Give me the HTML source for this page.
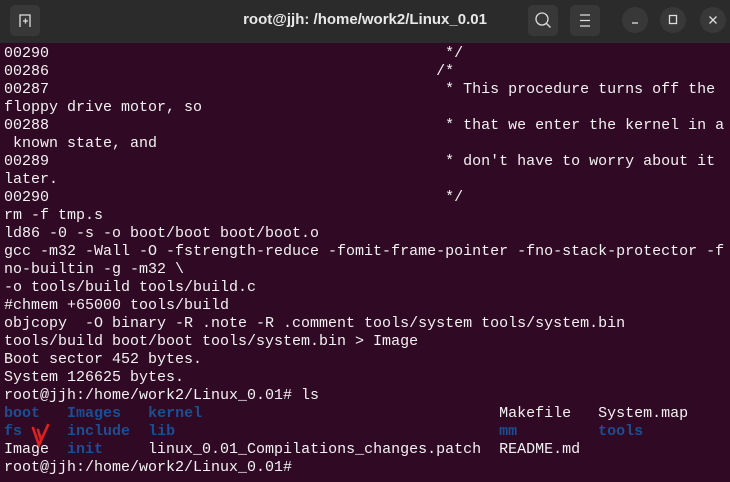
<!DOCTYPE html>
<html><head><meta charset="utf-8"><style>
html,body{margin:0;padding:0;width:730px;height:482px;overflow:hidden;background:#300a24;}
.tb{position:absolute;left:0;top:0;width:730px;height:43px;background:#2b2b2b;}
.title{position:absolute;left:0;width:730px;top:11px;text-align:center;color:#e8e8e8;font:bold 15px "Liberation Sans",sans-serif;}
.btn{position:absolute;top:5px;width:30px;height:31px;background:#383838;border-radius:5px;}
.circ{position:absolute;top:7px;width:26px;height:26px;border-radius:50%;background:#383838;}
pre{position:absolute;left:4px;top:45px;margin:0;font:15px/18px "Liberation Mono",monospace;color:#f2f2f2;}
.d{color:#1a4f96;font-weight:bold;}
</style></head><body>
<div class="tb">
<div class="btn" style="left:10px;"><svg width="30" height="31"><path d="M10 22V10h10v12M13 16h5M15.5 13.5v5" stroke="#ddd" stroke-width="1.3" fill="none"/></svg></div>
<div class="title">root@jjh: /home/work2/Linux_0.01</div>
<div class="btn" style="left:528px;"><svg width="30" height="31"><circle cx="14" cy="14" r="6" stroke="#ddd" stroke-width="1.3" fill="none"/><path d="M18.5 18.5l4 4" stroke="#ddd" stroke-width="1.3"/></svg></div>
<div class="btn" style="left:570px;"><svg width="30" height="31"><path d="M10 10h10M10 15.5h10M10 21h10" stroke="#ddd" stroke-width="1.3"/></svg></div>
<div class="circ" style="left:622px;"><svg width="26" height="26"><path d="M10 16h6" stroke="#ddd" stroke-width="1.3"/></svg></div>
<div class="circ" style="left:660px;"><svg width="26" height="26"><rect x="9.5" y="8.5" width="7" height="8" stroke="#ddd" stroke-width="1.3" fill="none"/></svg></div>
<div class="circ" style="left:700px;"><svg width="26" height="26"><path d="M9.5 9.5l7 7M16.5 9.5l-7 7" stroke="#ddd" stroke-width="1.3"/></svg></div>
</div>
<pre>00290                                            */
00286                                           /*
00287                                            * This procedure turns off the
floppy drive motor, so
00288                                            * that we enter the kernel in a
 known state, and
00289                                            * don't have to worry about it
later.
00290                                            */
rm -f tmp.s
ld86 -0 -s -o boot/boot boot/boot.o
gcc -m32 -Wall -O -fstrength-reduce -fomit-frame-pointer -fno-stack-protector -f
no-builtin -g -m32 \
-o tools/build tools/build.c
#chmem +65000 tools/build
objcopy  -O binary -R .note -R .comment tools/system tools/system.bin
tools/build boot/boot tools/system.bin &gt; Image
Boot sector 452 bytes.
System 126625 bytes.
root@jjh:/home/work2/Linux_0.01# ls
<span class="d">boot</span>   <span class="d">Images</span>   <span class="d">kernel</span>                                 Makefile   System.map
<span class="d">fs</span>     <span class="d">include</span>  <span class="d">lib</span>                                    <span class="d">mm</span>         <span class="d">tools</span>
Image  <span class="d">init</span>     linux_0.01_Compilations_changes.patch  README.md
root@jjh:/home/work2/Linux_0.01#</pre>
<svg style="position:absolute;left:30px;top:422px" width="26" height="26"><path d="M3 6l6 17 9-20M8 8l3 10" stroke="#e02020" stroke-width="2.6" fill="none" stroke-linecap="round"/></svg>
</body></html>
